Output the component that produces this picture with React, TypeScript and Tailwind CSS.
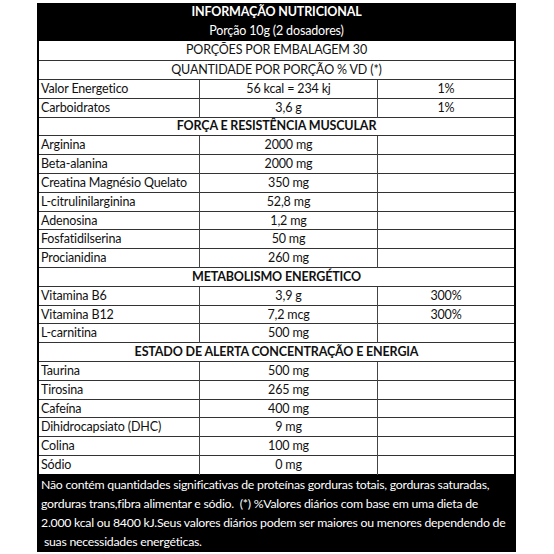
const rows: (string | [string, string, string?])[] = [
  ["Valor Energetico", "56 kcal = 234 kj", "1%"],
  ["Carboidratos", "3,6 g", "1%"],
  "FORÇA E RESISTÊNCIA MUSCULAR",
  ["Arginina", "2000 mg"],
  ["Beta-alanina", "2000 mg"],
  ["Creatina Magnésio Quelato", "350 mg"],
  ["L-citrulinilarginina", "52,8 mg"],
  ["Adenosina", "1,2 mg"],
  ["Fosfatidilserina", "50 mg"],
  ["Procianidina", "260 mg"],
  "METABOLISMO ENERGÉTICO",
  ["Vitamina B6", "3,9 g", "300%"],
  ["Vitamina B12", "7,2 mcg", "300%"],
  ["L-carnitina", "500 mg"],
  "ESTADO DE ALERTA CONCENTRAÇÃO E ENERGIA",
  ["Taurina", "500 mg"],
  ["Tirosina", "265 mg"],
  ["Cafeína", "400 mg"],
  ["Dihidrocapsiato (DHC)", "9 mg"],
  ["Colina", "100 mg"],
  ["Sódio", "0 mg"],
];

export default function App() {
  return (
    <div
      className="w-[554px] h-[554px] bg-white text-[12.5px] tracking-[-0.15px] text-[#111] whitespace-nowrap"
      style={{ fontFamily: "Lato, 'Open Sans', sans-serif" }}
    >
      <div className="ml-[37px] pt-[3px] w-[479px]">
        <div className="border-x-2 border-black">
          <div className="bg-black text-white text-center">
            <div className="h-[19px] flex items-center justify-center font-bold">INFORMAÇÃO NUTRICIONAL</div>
            <div className="h-[19px] flex items-center justify-center">Porção 10g (2 dosadores)</div>
          </div>
          <div className="h-[19px] flex items-center justify-center">PORÇÕES POR EMBALAGEM 30</div>
          <div className="h-[19px] flex items-center justify-center border-t border-[#333]">
            QUANTIDADE POR PORÇÃO % VD (*)
          </div>
          {rows.map((r, i) =>
            typeof r === "string" ? (
              <div key={i} className="h-[18.8px] flex items-center justify-center font-bold border-t border-[#333]">
                {r}
              </div>
            ) : (
              <div key={i} className="h-[18.8px] grid grid-cols-[161px_178px_1fr] border-t border-[#333]">
                <div className="flex items-center pl-[2px] border-r border-[#444]">{r[0]}</div>
                <div className="flex items-center justify-center border-r border-[#444]">{r[1]}</div>
                <div className="flex items-center justify-center">{r[2] ?? ""}</div>
              </div>
            )
          )}
          <div className="bg-black text-white leading-[19px] pl-[2px] pt-[1px] pb-[1px] whitespace-pre text-[12.3px] tracking-[-0.25px]">
            <div>Não contém quantidades significativas de proteínas gorduras totais, gorduras saturadas,</div>
            <div>gorduras trans,fibra alimentar e sódio.  (*) %Valores diários com base em uma dieta de</div>
            <div>2.000 kcal ou 8400 kJ.Seus valores diários podem ser maiores ou menores dependendo de</div>
            <div> suas necessidades energéticas.</div>
          </div>
        </div>
      </div>
    </div>
  );
}
